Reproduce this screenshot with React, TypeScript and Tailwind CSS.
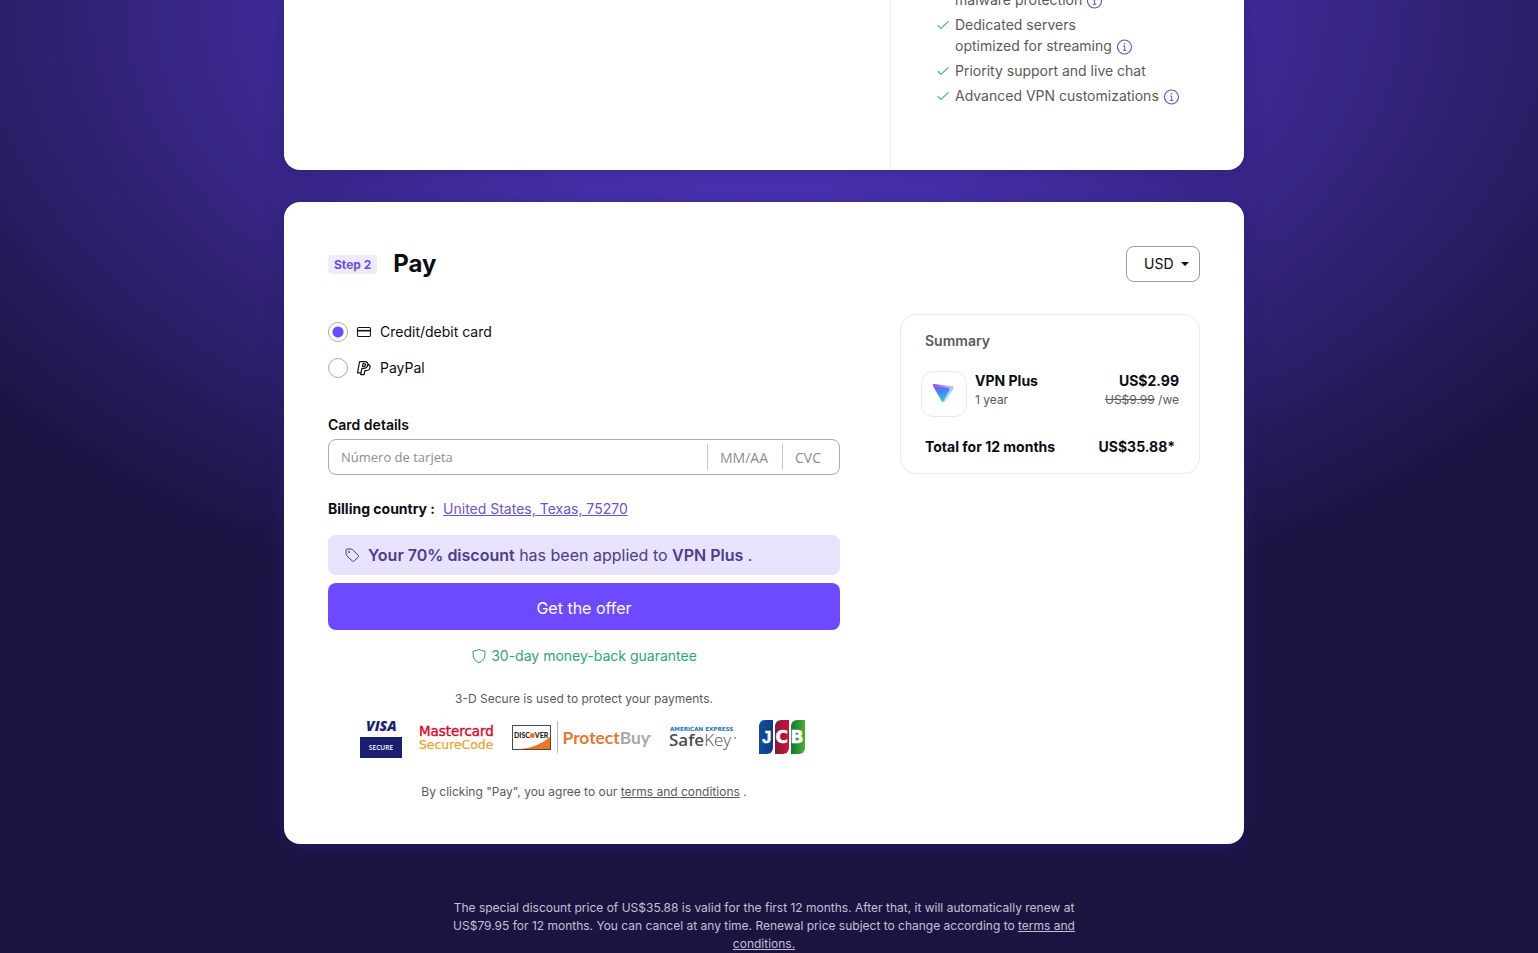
import type { ReactNode } from "react";

function CheckIcon() {
  return (
    <svg viewBox="0 0 16 16" className="mt-[3px] h-4 w-4 shrink-0" fill="none" stroke="#3aae84" strokeWidth="1.1" strokeLinecap="round" strokeLinejoin="round" aria-hidden="true">
      <path d="M3 8.500 6 11.300l7.200-6.600" />
    </svg>
  );
}

function InfoButton({ label }: { label: string }) {
  return (
    <button type="button" aria-label={label} className="ml-[5px] inline-block h-4 w-4 align-[-4px]">
      <svg viewBox="0 0 16 16" className="h-4 w-4" fill="none" stroke="#6a4fd0" aria-hidden="true">
        <circle cx="7.500" cy="8" r="7" strokeWidth="1.1" />
        <path d="M6.100 7h1.600v4.200M5.900 11.300h3.400" strokeWidth="1" />
        <circle cx="7.500" cy="4.800" r="0.750" fill="#6a4fd0" stroke="none" />
      </svg>
    </button>
  );
}

function Feature({ children, check = true }: { children: ReactNode; check?: boolean }) {
  return (
    <li className="flex gap-1">
      {check ? <CheckIcon /> : <span className="w-4 shrink-0" />}
      <span>{children}</span>
    </li>
  );
}

function CardIcon() {
  return (
    <svg viewBox="0 0 16 16" className="h-4 w-4" fill="none" stroke="#111" aria-hidden="true">
      <rect x="1.500" y="3.500" width="13" height="9" rx="1.200" strokeWidth="1.1" />
      <path d="M1.500 6.700h13" strokeWidth="1.6" />
    </svg>
  );
}

function PayPalIcon() {
  return (
    <svg viewBox="0 0 16 16" className="h-4 w-4" fill="none" stroke="#111" strokeWidth="1.2" strokeLinejoin="round" aria-hidden="true">
      <path d="M3.600 1.600h5.200c2.300 0 3.400 1.300 3 3.300-.5 2.300-2 3.400-4.200 3.400H5.900l-.9 4.500H1.500z" />
      <path d="M11.900 4.300c1.700.5 2.400 1.600 2.100 3.200-.4 2.200-1.900 3.100-3.900 3.100H8.900l-.8 4H4.700l.4-1.800" />
      <path d="M7 3.700h1.400c1 0 1.400.5 1.200 1.300-.2.900-.8 1.300-1.700 1.300H6.500z" />
    </svg>
  );
}

function TagIcon() {
  return (
    <svg viewBox="0 0 16 16" className="h-4 w-4" fill="none" stroke="#473a85" strokeLinejoin="round" aria-hidden="true">
      <path d="M2.100 3.100a1 1 0 0 1 1-1h4.300c.4 0 .8.200 1.100.5l5.500 5.500c.6.600.6 1.500 0 2.100l-3.700 3.700c-.6.600-1.500.6-2.100 0L2.600 8.500c-.3-.3-.5-.7-.5-1.100z" />
      <circle cx="5" cy="5" r="0.900" fill="#473a85" stroke="none" />
    </svg>
  );
}

function ShieldIcon() {
  return (
    <svg viewBox="0 0 16 16" className="h-4 w-4" fill="none" stroke="#2a9d73" strokeLinejoin="round" aria-hidden="true">
      <path d="M8 1.500c1.800 1 3.700 1.500 5.900 1.600v3.700c0 3.600-2 6-5.900 7.900C4.100 12.800 2.100 10.400 2.100 6.800V3.100C4.300 3 6.200 2.500 8 1.500z" />
    </svg>
  );
}

function VpnLogo() {
  return (
    <svg viewBox="0 0 24 24" className="h-6 w-6" aria-hidden="true">
      <defs>
        <linearGradient id="vpnFront" x1="5" y1="3" x2="11" y2="21" gradientUnits="userSpaceOnUse">
          <stop offset="0" stopColor="#8a5cf0" />
          <stop offset="0.4" stopColor="#4184f2" />
          <stop offset="1" stopColor="#2bd9cf" />
        </linearGradient>
        <linearGradient id="vpnBack" x1="3" y1="3" x2="17" y2="17" gradientUnits="userSpaceOnUse">
          <stop offset="0" stopColor="#9a55ec" />
          <stop offset="0.5" stopColor="#bcaaf8" />
          <stop offset="1" stopColor="#a3f3e6" />
        </linearGradient>
      </defs>
      <path d="M2.400 1.900 20 4.200c1.500.2 2.200 1.500 1.400 2.800L13 19.600c-.8 1.200-2.400 1.100-3-.1L1 3.700c-.6-1 .2-2 1.400-1.800z" fill="url(#vpnBack)" />
      <path d="M1.300 4.200 16 5.800c1.300.2 1.900 1.300 1.200 2.400l-6 11.300c-.4.500-.9.400-1.200 0z" fill="url(#vpnFront)" />
    </svg>
  );
}

function VisaLogo() {
  return (
    <svg viewBox="0 0 42 38" className="h-[38px] w-[42px] overflow-visible" role="img" aria-label="Visa Secure">
      <text x="6" y="11" fontFamily="Open Sans, sans-serif" fontWeight="800" fontStyle="italic" fontSize="14" fill="#1a1f71">VISA</text>
      <rect y="17" width="42" height="21" fill="#1a1f71" />
      <text x="21" y="30" textAnchor="middle" fontFamily="Open Sans, sans-serif" fontWeight="600" fontSize="6.600" fill="#fff">SECURE</text>
    </svg>
  );
}

function MastercardLogo() {
  return (
    <svg viewBox="0 0 74 38" className="h-[38px] w-[74px] overflow-visible" role="img" aria-label="Mastercard SecureCode">
      <text x="-1" y="15.500" fontFamily="DejaVu Sans, sans-serif" fontSize="13.400" fill="#e0062c" stroke="#e0062c" strokeWidth="0.400">Mastercard</text>
      <text x="-1" y="28.500" fontFamily="DejaVu Sans, sans-serif" fontSize="12.400" fill="#f3a024" stroke="#f3a024" strokeWidth="0.200">SecureCode</text>
    </svg>
  );
}

function DiscoverLogo() {
  return (
    <svg viewBox="0 0 139 38" className="h-[38px] w-[139px] overflow-visible" role="img" aria-label="Discover ProtectBuy">
      <rect x="0.500" y="5.500" width="38" height="24" fill="#fff" stroke="#4a4a4a" />
      <path d="M38 17v12H9c12-1.500 21-5.500 29-12z" fill="#ec7623" />
      <text x="2" y="18" fontFamily="Lato, sans-serif" fontWeight="900" fontSize="7" fill="#222">DISC</text>
      <circle cx="20.300" cy="15.500" r="2.500" fill="#ec7623" />
      <text x="22.800" y="18" fontFamily="Lato, sans-serif" fontWeight="900" fontSize="7" fill="#222">VER</text>
      <path d="M45.500 1v32" stroke="#b5b5b5" />
      <text x="50.500" y="24" fontFamily="Lato, sans-serif" fontWeight="700" fontSize="17.400" fill="#e27a2e">
        Protect<tspan fill="#a8a8ab">Buy</tspan>
      </text>
      <circle cx="138.500" cy="16" r="0.900" fill="#a8a8ab" />
    </svg>
  );
}

function SafeKeyLogo() {
  return (
    <svg viewBox="0 0 72 38" className="h-[38px] w-[72px] overflow-visible" role="img" aria-label="American Express SafeKey">
      <text x="1" y="11" fontFamily="DejaVu Sans, sans-serif" fontWeight="700" fontSize="5.600" fill="#1c76b9">AMERICAN EXPRESS</text>
      <text x="0" y="26" fontFamily="Open Sans, sans-serif" fontWeight="600" fontSize="17" fill="#4d4d4f">
        Safe<tspan fontWeight="300">Key</tspan>
      </text>
      <circle cx="66" cy="18" r="0.800" fill="#4d4d4f" />
    </svg>
  );
}

function JcbLogo() {
  return (
    <svg viewBox="0 0 46 34" className="h-[34px] w-[46px] overflow-visible" role="img" aria-label="JCB">
      <defs>
        <linearGradient id="jcbBlue"><stop stopColor="#0f4f9f" /><stop offset="1" stopColor="#0d3b86" /></linearGradient>
        <linearGradient id="jcbRed"><stop stopColor="#7c1a3c" /><stop offset="1" stopColor="#d80f35" /></linearGradient>
        <linearGradient id="jcbGreen"><stop stopColor="#0c7a36" /><stop offset="1" stopColor="#4bb12f" /></linearGradient>
      </defs>
      <path d="M6 0h8v28a6 6 0 0 1-6 6H0V6a6 6 0 0 1 6-6z" fill="url(#jcbBlue)" />
      <path d="M22 0h8v28a6 6 0 0 1-6 6h-8V6a6 6 0 0 1 6-6z" fill="url(#jcbRed)" />
      <path d="M38 0h8v28a6 6 0 0 1-6 6h-8V6a6 6 0 0 1 6-6z" fill="url(#jcbGreen)" />
      <g fontFamily="DejaVu Sans, sans-serif" fontWeight="700" fontSize="17" fill="#fff" stroke="#fff" strokeWidth="0.500">
        <text x="3" y="23" fontFamily="Liberation Sans, sans-serif">J</text>
        <text x="16.500" y="23">C</text>
        <text x="31.500" y="23">B</text>
      </g>
    </svg>
  );
}

export default function App() {
  return (
    <div className="min-h-screen overflow-hidden bg-[#1b1340] bg-[radial-gradient(1021px_648px_at_764px_0px,#5f3fe2,#1b1340)] pr-[10px] font-['Inter',sans-serif] text-sm text-[#0c0c14]">
      <section className="mx-auto -mt-[11px] flex max-w-[960px] rounded-b-2xl bg-white shadow-[0_4px_20px_rgba(35,25,95,0.4)]">
        <div className="flex-1" />
        <div className="w-[354px] border-l border-[#eaeaea] px-11 pb-16 leading-[21px] text-[#5c5958]">
          <ul className="flex flex-col gap-1">
            <Feature check={false}>
              malware protection
              <InfoButton label="About malware protection" />
            </Feature>
            <Feature>
              Dedicated servers
              <br />
              optimized for streaming
              <InfoButton label="About streaming servers" />
            </Feature>
            <Feature>Priority support and live chat</Feature>
            <Feature>
              Advanced VPN customizations
              <InfoButton label="About VPN customizations" />
            </Feature>
          </ul>
        </div>
      </section>

      <main className="mx-auto mt-8 max-w-[960px] rounded-2xl bg-white px-11 pt-11 pb-[43px] shadow-[0_4px_20px_rgba(40,30,110,0.7)]">
        <header className="flex items-center justify-between">
          <div className="flex items-center gap-4">
            <span className="rounded-sm bg-[#efebff] px-1.5 text-xs leading-[19px] font-bold text-[#6a4fd8]">Step 2</span>
            <h1 className="text-2xl leading-9 font-bold">Pay</h1>
          </div>
          <div className="relative">
            <select aria-label="Currency" className="h-9 w-[74px] appearance-none rounded-lg border border-[#9d9b9a] bg-white pl-[17px] text-sm">
              <option>USD</option>
            </select>
            <svg viewBox="0 0 8 4" className="pointer-events-none absolute top-4 right-[11px] h-1 w-2" aria-hidden="true">
              <path d="M0 0h8L4 4z" fill="#0c0c14" />
            </svg>
          </div>
        </header>

        <div className="mt-8 flex items-start gap-[60px]">
          <form className="min-w-0 flex-1" onSubmit={(e) => e.preventDefault()}>
            <div className="flex flex-col gap-4 pt-2">
              <label className="flex h-5 items-center gap-2">
                <input type="radio" name="method" defaultChecked className="h-5 w-5 appearance-none rounded-full border border-[#adabaa] bg-white checked:bg-[radial-gradient(circle,#6d4aff_5px,transparent_6px)]" />
                <CardIcon />
                Credit/debit card
              </label>
              <label className="flex h-5 items-center gap-2">
                <input type="radio" name="method" className="h-5 w-5 appearance-none rounded-full border border-[#adabaa] bg-white checked:bg-[radial-gradient(circle,#6d4aff_5px,transparent_6px)]" />
                <PayPalIcon />
                PayPal
              </label>
            </div>

            <label htmlFor="card-number" className="mt-9 mb-1 block leading-[21px] font-semibold">Card details</label>
            <div className="flex h-9 items-center rounded-lg border border-[#adabaa] font-['Open_Sans',sans-serif]">
              <input id="card-number" placeholder="Número de tarjeta" className="min-w-0 flex-1 px-3 text-[13px] outline-none placeholder:text-[#8f8d8a]" />
              <input aria-label="Expiry date" placeholder="MM/AA" className="h-[26px] w-[75px] border-l border-[#c9c8c6] px-3 outline-none placeholder:text-[#8f8d8a]" />
              <input aria-label="Security code" placeholder="CVC" className="h-[26px] w-[57px] border-l border-[#c9c8c6] px-3 outline-none placeholder:text-[#8f8d8a]" />
            </div>

            <p className="mt-[23px] flex gap-2 leading-[21px]">
              <span className="font-bold">Billing country :</span>
              <a href="#billing" className="text-[#6f50d8] underline">United States, Texas, 75270</a>
            </p>

            <p className="mt-4 flex h-10 items-center gap-2 rounded-lg bg-[#e8e2fd] px-4 text-base text-[#4c3d8c]">
              <TagIcon />
              <span><b className="font-semibold">Your 70% discount</b> has been applied to <b className="font-semibold">VPN Plus</b> .</span>
            </p>
            <button type="submit" className="mt-2 h-[47px] w-full rounded-lg bg-[#6d4aff] pt-0.5 text-base text-white">Get the offer</button>

            <p className="mt-[15px] flex items-center justify-center gap-1 leading-[21px] text-[#2ba67b]">
              <ShieldIcon />
              30-day money-back guarantee
            </p>
            <p className="mt-6 text-center text-xs leading-[18px] text-[#5c5958]">3-D Secure is used to protect your payments.</p>

            <div className="mt-3 flex items-start justify-center gap-[18px] pr-1">
              <VisaLogo />
              <MastercardLogo />
              <DiscoverLogo />
              <SafeKeyLogo />
              <JcbLogo />
            </div>

            <p className="mt-[25px] text-center text-xs leading-[18px] text-[#5c5958]">
              By clicking "Pay", you agree to our <a href="#terms" className="underline">terms and conditions</a> .
            </p>
          </form>

          <aside className="w-[300px] shrink-0 rounded-2xl border border-[#eaeaea] px-5 pt-[15px] pb-4">
            <h2 className="pl-1 leading-[21px] font-semibold text-[#5c5958]">Summary</h2>
            <div className="mt-5 flex gap-2">
              <div className="flex h-[46px] w-[46px] items-center justify-center rounded-xl border border-[#eaeaea]">
                <VpnLogo />
              </div>
              <div className="flex-1">
                <p className="leading-5 font-bold">VPN Plus</p>
                <p className="text-xs leading-[18px] text-[#5c5958]">1 year</p>
              </div>
              <div className="text-right">
                <p className="leading-5 font-bold">US$2.99</p>
                <p className="text-xs leading-[18px] text-[#5c5958]"><s>US$9.99</s> /we</p>
              </div>
            </div>
            <p className="mt-[19px] flex justify-between px-1 leading-[21px] font-bold">
              <span>Total for 12 months</span>
              <span>US$35.88*</span>
            </p>
          </aside>
        </div>
      </main>

      <footer className="mx-auto mt-[55px] max-w-[640px] text-center text-xs leading-[18px] text-[#c5c0d6]">
        The special discount price of US$35.88 is valid for the first 12 months. After that, it will automatically renew at US$79.95 for 12 months. You can cancel at any time. Renewal price subject to change according to <a href="#conditions" className="underline">terms and conditions.</a>
      </footer>
    </div>
  );
}
